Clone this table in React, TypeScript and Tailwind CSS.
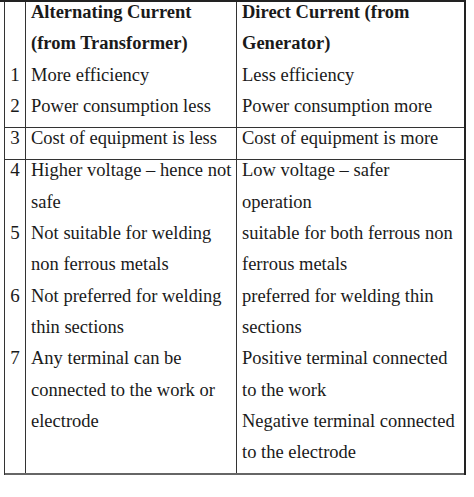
import React from "react";

type Line = { t: string; b?: boolean };

const g1num = ["", "", "1", "2"];
const g1ac: Line[] = [
  { t: "Alternating Current", b: true },
  { t: "(from Transformer)", b: true },
  { t: "More efficiency" },
  { t: "Power consumption less" },
];
const g1dc: Line[] = [
  { t: "Direct Current (from", b: true },
  { t: "Generator)", b: true },
  { t: "Less efficiency" },
  { t: "Power consumption more" },
];
const g2num = ["3"];
const g2ac: Line[] = [{ t: "Cost of equipment is less" }];
const g2dc: Line[] = [{ t: "Cost of equipment is more" }];
const g3num = ["4", "", "5", "", "6", "", "7", "", "", ""];
const g3ac: Line[] = [
  { t: "Higher voltage – hence not" },
  { t: "safe" },
  { t: "Not suitable for welding" },
  { t: "non ferrous metals" },
  { t: "Not preferred for welding" },
  { t: "thin sections" },
  { t: "Any terminal can be" },
  { t: "connected to the work or" },
  { t: "electrode" },
];
const g3dc: Line[] = [
  { t: "Low voltage – safer" },
  { t: "operation" },
  { t: "suitable for both ferrous non" },
  { t: "ferrous metals" },
  { t: "preferred for welding thin" },
  { t: "sections" },
  { t: "Positive terminal connected" },
  { t: "to the work" },
  { t: "Negative terminal connected" },
  { t: "to the electrode" },
];

function Cell({ lines, className }: { lines: Line[]; className?: string }) {
  return (
    <div className={className}>
      {lines.map((l, i) => (
        <div key={i} className={"h-[31.3px] leading-[20px] whitespace-nowrap " + (l.b ? "font-bold" : "")}>
          {l.t}
        </div>
      ))}
    </div>
  );
}

function Nums({ nums, className }: { nums: string[]; className?: string }) {
  return (
    <div className={className}>
      {nums.map((n, i) => (
        <div key={i} className="h-[31.3px] leading-[20px] text-center text-[19px]">
          {n}
        </div>
      ))}
    </div>
  );
}

function Group({
  nums,
  ac,
  dc,
  last,
}: {
  nums: string[];
  ac: Line[];
  dc: Line[];
  last?: boolean;
}) {
  return (
    <div
      className={
        "grid grid-cols-[21px_211px_1fr] " +
        (last ? "border-b-2 border-[#666]" : "border-b border-[#333]")
      }
    >
      <Nums nums={nums} className="border-r-[1.5px] border-[#333]" />
      <Cell lines={ac} className="border-r border-[#333] pl-[5px]" />
      <Cell lines={dc} className="pl-[5px]" />
    </div>
  );
}

export default function App() {
  return (
    <div
      className="w-[474px] h-[497px] bg-white text-[#1a1a1a] text-[18.5px]"
      style={{ fontFamily: '"Liberation Serif", "Times New Roman", serif' }}
    >
      <div className="w-[466px] h-[2px] bg-[#222]" />
      <div className="ml-[4px] w-[462px] border-l border-[#333] border-r-2 border-r-[#222]">
        <Group nums={g1num} ac={g1ac} dc={g1dc} />
        <Group nums={g2num} ac={g2ac} dc={g2dc} />
        <Group nums={g3num} ac={g3ac} dc={g3dc} last />
      </div>
    </div>
  );
}
